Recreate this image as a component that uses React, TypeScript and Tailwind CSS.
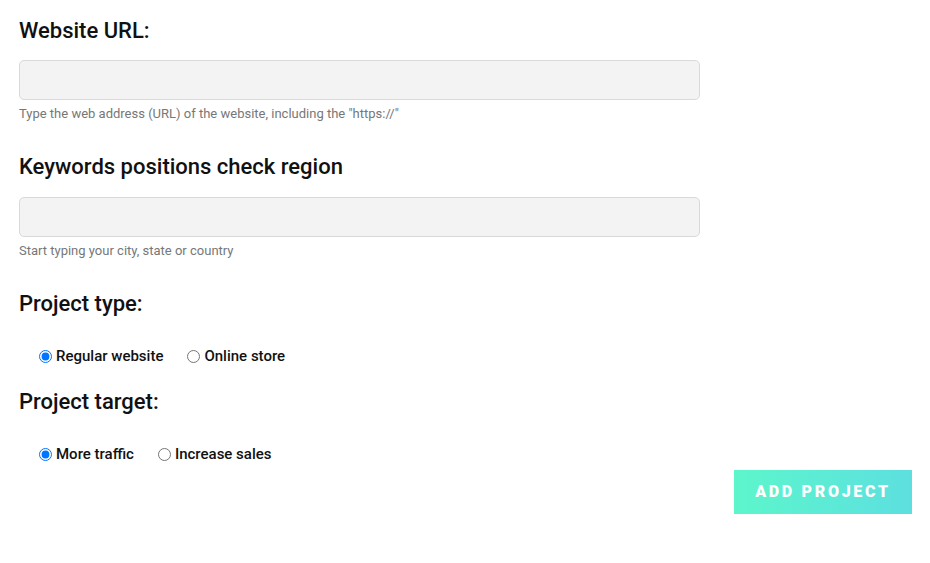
import { useState } from 'react';

type Option = { value: string; label: string };

function Radios({ name, options, value, onChange }: { name: string; options: Option[]; value: string; onChange: (v: string) => void }) {
  return (
    <div className="flex items-center gap-[24px] pl-[20px] h-[20px]">
      {options.map((o) => (
        <label key={o.value} className="flex items-center gap-[4px] text-[15px] leading-[20px] font-medium text-[#111]">
          <input
            type="radio"
            name={name}
            checked={value === o.value}
            onChange={() => onChange(o.value)}
            className="m-0 w-[13px] h-[13px] accent-[#0075ff]"
          />
          {o.label}
        </label>
      ))}
    </div>
  );
}

export default function App() {
  const [type, setType] = useState('regular');
  const [target, setTarget] = useState('traffic');

  return (
    <div className="w-[930px] h-[563px] bg-white pl-[19px] pr-[18px] pt-[19px] font-['Roboto',sans-serif]">
      <h2 className="text-[22px] leading-[24px] font-medium text-[#111]">Website URL:</h2>
      <input
        type="text"
        className="mt-[17px] block w-[681px] h-[40px] rounded-[5px] border border-[#d9d9d9] bg-[#f3f3f3] px-3 outline-none"
      />
      <p className="mt-[6px] text-[13px] leading-[16px] text-[#777]">
        Type the web address (URL) of the website, including the "https://"
      </p>

      <h2 className="mt-[33px] text-[22px] leading-[24px] font-medium text-[#111]">Keywords positions check region</h2>
      <input
        type="text"
        className="mt-[18px] block w-[681px] h-[40px] rounded-[5px] border border-[#d9d9d9] bg-[#f3f3f3] px-3 outline-none"
      />
      <p className="mt-[6px] text-[13px] leading-[16px] text-[#777]">Start typing your city, state or country</p>

      <h2 className="mt-[33px] text-[22px] leading-[24px] font-medium text-[#111]">Project type:</h2>
      <div className="mt-[30px]">
        <Radios
          name="type"
          value={type}
          onChange={setType}
          options={[
            { value: 'regular', label: 'Regular website' },
            { value: 'store', label: 'Online store' },
          ]}
        />
      </div>

      <h2 className="mt-[24px] text-[22px] leading-[24px] font-medium text-[#111]">Project target:</h2>
      <div className="mt-[30px]">
        <Radios
          name="target"
          value={target}
          onChange={setTarget}
          options={[
            { value: 'traffic', label: 'More traffic' },
            { value: 'sales', label: 'Increase sales' },
          ]}
        />
      </div>

      <div className="mt-[6px] flex justify-end">
        <button
          type="button"
          className="w-[178px] h-[44px] bg-gradient-to-r from-[#5cf6cb] to-[#5ddfdf] text-white text-[16px] font-black tracking-[0.17em] uppercase"
        >
          Add project
        </button>
      </div>
    </div>
  );
}
